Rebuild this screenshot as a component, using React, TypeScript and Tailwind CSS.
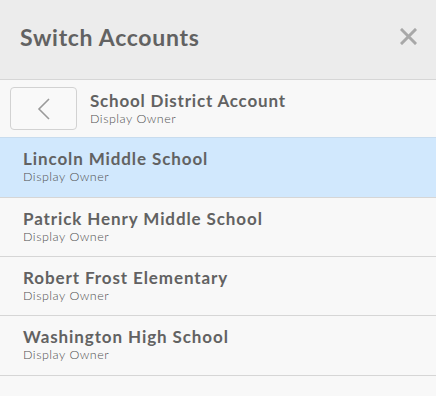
import React from "react";

const items = [
  { name: "Lincoln Middle School", selected: true },
  { name: "Patrick Henry Middle School" },
  { name: "Robert Frost Elementary" },
  { name: "Washington High School", last: true },
];

export default function App() {
  return (
    <div
      className="w-[436px] h-[396px] bg-[#f8f8f8] text-[#626262] overflow-hidden"
      style={{ fontFamily: "Lato, 'Noto Sans', sans-serif" }}
    >
      <div className="h-[80px] bg-[#ececec] border-b border-[#d6d6d6] flex items-center justify-between pl-[20px] pr-[19px]">
        <h1 className="text-[23px] font-bold tracking-[0.7px] leading-none mt-[-4px]">Switch Accounts</h1>
        <svg width="17" height="17" viewBox="0 0 17 17" className="mt-[-7px]">
          <path d="M2 2 L15 15 M15 2 L2 15" stroke="#a8a8a8" strokeWidth="3" strokeLinecap="square" />
        </svg>
      </div>
      <div className="h-[57px] flex items-center pl-[10px]">
        <div className="w-[67px] h-[43px] border border-[#d2d2d2] rounded-[4px] bg-[#f9f9f9] flex items-center justify-center">
          <svg width="14" height="22" viewBox="0 0 14 22">
            <path d="M12 1 L2 11 L12 21" fill="none" stroke="#9a9a9a" strokeWidth="1.6" />
          </svg>
        </div>
        <div className="ml-[13px] flex flex-col mt-[-1px]">
          <span className="text-[17px] font-bold leading-[20px] tracking-[0.8px]">School District Account</span>
          <span className="text-[12.5px] font-light leading-[15px] tracking-[0.5px] text-[#505050]">Display Owner</span>
        </div>
      </div>
      {items.map((it) => (
        <div
          key={it.name}
          className={`border-b border-[#d6d6d6] flex flex-col justify-center pl-[23px] ${
            it.selected ? "bg-[#d1e8fd] border-t border-t-[#c8dcee] h-[61px]" : it.last ? "h-[60px]" : "h-[59px]"
          }`}
        >
          <span className="text-[17px] font-bold leading-[20px] mt-[-2px] tracking-[0.9px]">{it.name}</span>
          <span className="text-[12.5px] font-light leading-[15px] tracking-[0.5px] text-[#505050]">Display Owner</span>
        </div>
      ))}
    </div>
  );
}
